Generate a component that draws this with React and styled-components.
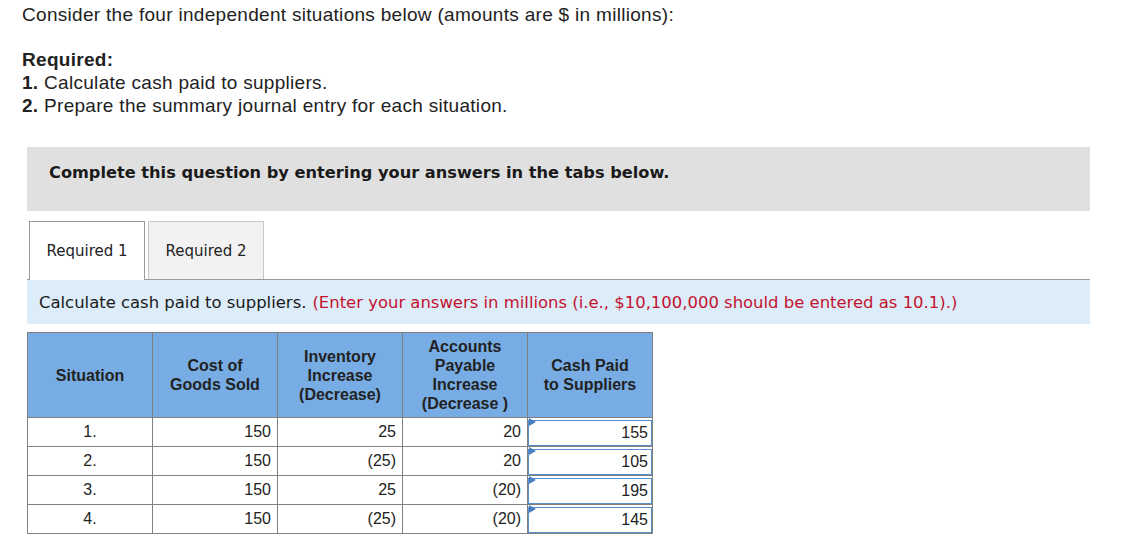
import React from "react";
import styled, { createGlobalStyle } from "styled-components";

const GlobalStyle = createGlobalStyle`
  body {
    margin: 0;
    background: #fff;
    font-family: "Liberation Sans", Arial, sans-serif;
    color: #222;
  }
`;

const Page = styled.div`
  width: 1125px;
  padding: 3px 0 0 0;
`;

const Intro = styled.div`
  padding-left: 22px;
  font-size: 19px;
  line-height: 23px;
  color: #222;
  letter-spacing: 0.3px;
`;

const Para = styled.p`
  margin: 0 0 22px;
`;

const Line = styled.div`
  b { font-weight: 700; }
`;

const Section = styled.div`
  margin: 0 35px 0 27px;
`;

const Notice = styled.div`
  margin-top: 30px;
  height: 64px;
  box-sizing: border-box;
  background: #e0e0e0;
  padding: 16px 0 0 22px;
  font-family: "DejaVu Sans", Verdana, sans-serif;
  font-weight: 700;
  font-size: 16.2px;
  line-height: 20px;
  color: #1a1a1a;
  white-space: nowrap;
`;

const Tabs = styled.div`
  margin-top: 10px;
  display: flex;
  gap: 3px;
  border-bottom: 1px solid #9a9a9a;
  padding-left: 2px;
`;

const Tab = styled.div`
  width: 114px;
  display: flex;
  align-items: center;
  justify-content: center;
  font-family: "DejaVu Sans", Verdana, sans-serif;
  font-size: 15px;
  color: #222;
  border: 1px solid ${({ $active }) => ($active ? "#9a9a9a" : "#c8c8c8")};
  border-bottom: none;
  background: ${({ $active }) => ($active ? "#fff" : "#f2f2f2")};
  margin-bottom: ${({ $active }) => ($active ? "-1px" : "0")};
  height: ${({ $active }) => ($active ? "58px" : "57px")};
`;

const Hint = styled.div`
  height: 44px;
  background: #dcecf9;
  display: flex;
  align-items: center;
  padding-left: 12px;
  font-family: "DejaVu Sans", Verdana, sans-serif;
  font-size: 16.45px;
  color: #1a1a1a;
  white-space: nowrap;
  span { color: #c4122f; margin-left: 6px; }
`;

const Table = styled.table`
  margin-top: 8px;
  border-collapse: collapse;
  font-family: "Liberation Sans", Arial, sans-serif;
  font-size: 16px;
  color: #222;
`;

const Th = styled.th`
  width: 124px;
  height: 84px;
  padding: 0;
  background: #77ade4;
  border: 1px solid #808080;
  font-weight: 700;
  font-size: 16px;
  line-height: 19px;
  color: #222;
`;

const Td = styled.td`
  height: 28px;
  border: 1px solid #808080;
  text-align: ${({ $center }) => ($center ? "center" : "right")};
  padding: 0 ${({ $center }) => ($center ? "0" : "6px")} 0 0;
`;

const InputTd = styled.td`
  height: 28px;
  padding: 0;
  border: 1px solid #808080;
  position: relative;
`;

const Answer = styled.div`
  height: 24px;
  margin-top: 1px;
  border: 1px solid #5a8fcf;
  background: #fff;
  display: flex;
  align-items: center;
  justify-content: flex-end;
  padding-right: 3px;
`;

const Flag = styled.span`
  position: absolute;
  left: 1px;
  top: 0;
  width: 0;
  height: 0;
  border-top: 4px solid transparent;
  border-bottom: 4px solid transparent;
  border-left: 7px solid #4a7fc0;
`;

const rows = [
  ["1.", "150", "25", "20", "155"],
  ["2.", "150", "(25)", "20", "105"],
  ["3.", "150", "25", "(20)", "195"],
  ["4.", "150", "(25)", "(20)", "145"],
];

const headers = [
  ["Situation"],
  ["Cost of", "Goods Sold"],
  ["Inventory", "Increase", "(Decrease)"],
  ["Accounts", "Payable", "Increase", "(Decrease )"],
  ["Cash Paid", "to Suppliers"],
];

const App = () => (
  <Page>
    <GlobalStyle />
    <Intro>
      <Para>Consider the four independent situations below (amounts are $ in millions):</Para>
      <Line><b>Required:</b></Line>
      <Line><b>1.</b> Calculate cash paid to suppliers.</Line>
      <Line><b>2.</b> Prepare the summary journal entry for each situation.</Line>
    </Intro>
    <Section>
      <Notice>Complete this question by entering your answers in the tabs below.</Notice>
      <Tabs>
        <Tab $active>Required 1</Tab>
        <Tab>Required 2</Tab>
      </Tabs>
      <Hint>
        Calculate cash paid to suppliers.
        <span>(Enter your answers in millions (i.e., $10,100,000 should be entered as 10.1).)</span>
      </Hint>
      <Table>
        <thead>
          <tr>
            {headers.map((lines) => (
              <Th key={lines[0]}>
                {lines.map((l, i) => (
                  <React.Fragment key={l}>{i > 0 && <br />}{l}</React.Fragment>
                ))}
              </Th>
            ))}
          </tr>
        </thead>
        <tbody>
          {rows.map(([sit, cogs, inv, ap, cash]) => (
            <tr key={sit}>
              <Td $center>{sit}</Td>
              <Td>{cogs}</Td>
              <Td>{inv}</Td>
              <Td>{ap}</Td>
              <InputTd>
                <Flag />
                <Answer>{cash}</Answer>
              </InputTd>
            </tr>
          ))}
        </tbody>
      </Table>
    </Section>
  </Page>
);

export default App;
